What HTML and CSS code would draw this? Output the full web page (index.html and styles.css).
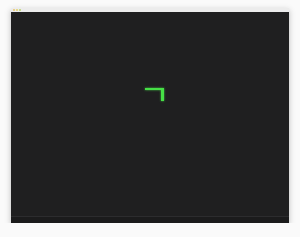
FILE: index.html
```html
<!DOCTYPE html>
<html lang="en">
<head>
    <meta charset="UTF-8">
    <meta name="viewport" content="width=device-width, initial-scale=1.0">
    <title>Loader</title>
    <link rel="stylesheet" href="styles.css">
</head>
<body>
    <div class="window">
        <div class="titlebar">
            <span class="dot red"></span>
            <span class="dot yellow"></span>
            <span class="dot green"></span>
        </div>
        <div class="stage">
            <div class="corner"></div>
        </div>
        <div class="statusbar"></div>
    </div>
</body>
</html>
```

FILE: styles.css
```css
body {
    margin: 0;
    padding: 8px 11px 0;
    background: #fafafa;
    font-family: "Liberation Sans", Arial, sans-serif;
}
.window {
    width: 278px;
    background: #1f1f20;
    box-shadow: 0 2px 6px rgba(0, 0, 0, 0.25);
}
.titlebar {
    height: 4px;
    background: #ececec;
    display: flex;
    align-items: center;
    gap: 1px;
    padding-left: 2px;
}
.dot {
    width: 2px;
    height: 2px;
    border-radius: 50%;
}
.dot.red { background: #e8c46a; }
.dot.yellow { background: #e8d36a; }
.dot.green { background: #b9d36a; }
.stage {
    height: 204px;
    padding: 76px 0 0 134px;
    box-sizing: border-box;
}
.corner {
    width: 16px;
    height: 11px;
    border-top: 2px solid #46e046;
    border-right: 3px solid #46e046;
    filter: drop-shadow(0 0 1px rgba(70, 224, 70, 0.8));
}
.statusbar {
    height: 6px;
    border-top: 1px solid #2c2c2e;
    background: #1b1b1c;
}
```
